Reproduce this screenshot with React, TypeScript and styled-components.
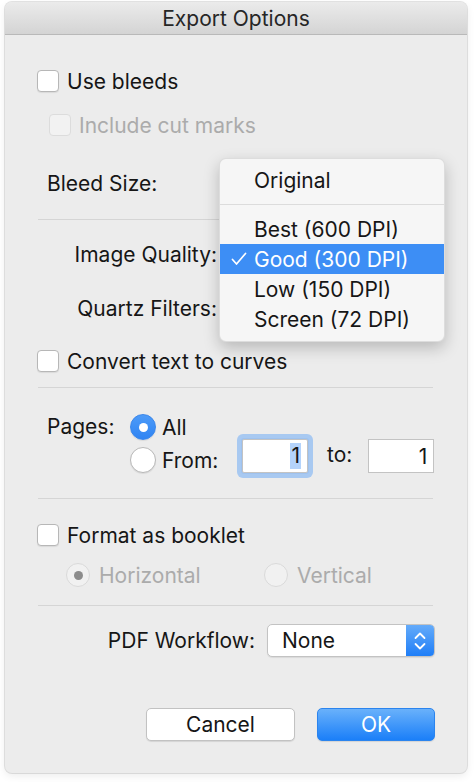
import React from 'react';
import styled, { createGlobalStyle } from 'styled-components';

const GlobalStyle = createGlobalStyle`
  html, body {
    margin: 0;
    padding: 0;
    background: #ffffff;
  }
  body {
    font-family: Inter, 'Liberation Sans', sans-serif;
    color: #161616;
    -webkit-font-smoothing: antialiased;
  }
`;

const Page = styled.div`
  width: 474px;
  height: 782px;
  padding: 2px 7px 0 5px;
  box-sizing: border-box;
`;

const Window = styled.div`
  position: relative;
  width: 462px;
  height: 771px;
  background: #ececec;
  border-radius: 7px;
  box-shadow: 0 0 0 1px rgba(0, 0, 0, 0.1), 0 3px 8px rgba(0, 0, 0, 0.08);
  display: flex;
  flex-direction: column;
`;

const TitleBar = styled.div`
  height: 33px;
  box-sizing: border-box;
  border-radius: 7px 7px 0 0;
  border-bottom: 1px solid #b9b9b9;
  background: linear-gradient(#ebebeb, #d4d4d4);
  display: flex;
  align-items: center;
  justify-content: center;
  font-size: 21px;
  color: #262626;
`;

const Body = styled.div`
  display: flex;
  flex-direction: column;
  padding: 0 32px;
  font-size: 21px;
`;

const Row = styled.div<{ $top: number; $indent?: number; $h: number }>`
  display: flex;
  align-items: center;
  height: ${(p) => p.$h}px;
  margin-top: ${(p) => p.$top}px;
  padding-left: ${(p) => p.$indent ?? 0}px;
  gap: 8px;
`;

const Separator = styled.div<{ $top: number }>`
  height: 1px;
  background: #d5d5d5;
  margin: ${(p) => p.$top}px 2px 0 1px;
`;

const Box = styled.span<{ $disabled?: boolean }>`
  width: 22px;
  height: 22px;
  box-sizing: border-box;
  border-radius: 4px;
  background: ${(p) => (p.$disabled ? '#f2f2f2' : '#ffffff')};
  border: 1px solid ${(p) => (p.$disabled ? '#dcdcdc' : '#b7b7b7')};
  box-shadow: ${(p) => (p.$disabled ? 'none' : '0 1px 1px rgba(0,0,0,0.08)')};
  flex: none;
`;

const Text = styled.span<{ $disabled?: boolean }>`
  color: ${(p) => (p.$disabled ? '#ababab' : '#161616')};
  white-space: nowrap;
  line-height: 1;
`;

const FieldLabel = styled.span<{ $width: number; $align?: string; $indent?: number }>`
  width: ${(p) => p.$width}px;
  text-align: ${(p) => p.$align ?? 'right'};
  padding-left: ${(p) => p.$indent ?? 0}px;
  box-sizing: border-box;
  white-space: nowrap;
  flex: none;
  line-height: 26px;
`;

const Radio = styled.span<{ $on?: boolean; $disabled?: boolean; $size: number }>`
  width: ${(p) => p.$size}px;
  height: ${(p) => p.$size}px;
  box-sizing: border-box;
  border-radius: 50%;
  flex: none;
  display: flex;
  align-items: center;
  justify-content: center;
  background: ${(p) =>
    p.$on && !p.$disabled ? 'linear-gradient(#4d9bf8, #2f84f3)' : p.$disabled ? '#f1f1f1' : '#ffffff'};
  border: 1px solid
    ${(p) => (p.$on && !p.$disabled ? '#3a86ea' : p.$disabled ? '#dadada' : '#b8b8b8')};
  box-shadow: ${(p) => (p.$disabled ? 'none' : '0 1px 1px rgba(0,0,0,0.08)')};

  &::after {
    content: '';
    display: ${(p) => (p.$on ? 'block' : 'none')};
    width: 9px;
    height: 9px;
    border-radius: 50%;
    background: ${(p) => (p.$disabled ? '#8c8c8c' : '#ffffff')};
  }
`;

const PagesBlock = styled.div`
  display: flex;
  margin-top: 26px;
`;

const PagesColumn = styled.div`
  display: flex;
  flex-direction: column;
`;

const RadioRow = styled.div<{ $h: number; $top?: number }>`
  display: flex;
  align-items: flex-end;
  height: ${(p) => p.$h}px;
  margin-top: ${(p) => p.$top ?? 0}px;
`;

const RadioItem = styled.span<{ $width?: number; $gap?: number }>`
  display: flex;
  align-items: center;
  gap: ${(p) => p.$gap ?? 6}px;
  height: 26px;
  width: ${(p) => (p.$width ? `${p.$width}px` : 'auto')};
  flex: none;
`;

const NumberField = styled.span<{ $focused?: boolean; $width: number; $left: number }>`
  width: ${(p) => p.$width}px;
  height: 34px;
  box-sizing: border-box;
  margin-left: ${(p) => p.$left}px;
  background: #ffffff;
  border: 1px solid #c3c3c3;
  display: flex;
  align-items: center;
  justify-content: flex-end;
  padding-right: 6px;
  box-shadow: ${(p) => (p.$focused ? '0 0 0 1px #9fc2ee, 0 0 0 5px #a8c9f1' : 'none')};
  border-radius: ${(p) => (p.$focused ? '2px' : '0')};
  flex: none;
`;

const Selected = styled.span`
  background: #b4d3fb;
  padding: 2px 1px 3px;
  line-height: 1;
`;

const ToLabel = styled.span`
  margin-left: 19px;
  margin-bottom: 5px;
  line-height: 26px;
`;

const PopupButton = styled.div`
  width: 168px;
  height: 33px;
  box-sizing: border-box;
  background: #ffffff;
  border: 1px solid #c3c3c3;
  border-radius: 5px;
  box-shadow: 0 1px 1px rgba(0, 0, 0, 0.08);
  display: flex;
  align-items: center;
  overflow: hidden;
  margin-left: 12px;
`;

const PopupValue = styled.span`
  flex: 1;
  padding-left: 14px;
`;

const Stepper = styled.span`
  width: 28px;
  height: 100%;
  background: linear-gradient(#64abfa, #1f7ef7);
  display: flex;
  align-items: center;
  justify-content: center;
`;

const ButtonRow = styled.div`
  display: flex;
  justify-content: flex-end;
  gap: 22px;
  margin-top: 51px;
`;

const Button = styled.button<{ $primary?: boolean; $width: number }>`
  width: ${(p) => p.$width}px;
  height: 33px;
  border-radius: 5px;
  font: inherit;
  font-size: 21px;
  cursor: pointer;
  color: ${(p) => (p.$primary ? '#ffffff' : '#161616')};
  background: ${(p) => (p.$primary ? 'linear-gradient(#69b1fb, #1b7ff8)' : '#ffffff')};
  border: 1px solid ${(p) => (p.$primary ? '#2b84ee' : '#c2c2c2')};
  box-shadow: 0 1px 1px rgba(0, 0, 0, 0.1);
`;

const Menu = styled.div`
  position: absolute;
  left: 214px;
  top: 156px;
  width: 226px;
  height: 184px;
  box-sizing: border-box;
  padding: 6px 0;
  background: #f6f6f6;
  border-radius: 7px;
  border: 1px solid rgba(0, 0, 0, 0.1);
  box-shadow: 0 6px 16px rgba(0, 0, 0, 0.22);
  font-size: 21px;
`;

const MenuItem = styled.div<{ $active?: boolean }>`
  position: relative;
  height: 30px;
  display: flex;
  align-items: center;
  padding-left: 34px;
  background: ${(p) => (p.$active ? '#3d8ef5' : 'transparent')};
  color: ${(p) => (p.$active ? '#ffffff' : '#161616')};
`;

const MenuDivider = styled.div`
  height: 1px;
  background: #dcdcdc;
  margin: 9px 0 9px;
`;

const Check = styled.svg`
  position: absolute;
  left: 11px;
  top: 8px;
`;

const menuItems = ['Best (600 DPI)', 'Good (300 DPI)', 'Low (150 DPI)', 'Screen (72 DPI)'];

export default function App() {
  return (
    <>
      <GlobalStyle />
      <Page>
        <Window>
          <TitleBar>Export Options</TitleBar>
          <Body>
            <Row $top={35} $h={22}>
              <Box />
              <Text>Use bleeds</Text>
            </Row>
            <Row $top={22} $h={22} $indent={12}>
              <Box $disabled />
              <Text $disabled>Include cut marks</Text>
            </Row>
            <Row $top={31} $h={34}>
              <FieldLabel $width={140} $align="left" $indent={10}>
                Bleed Size:
              </FieldLabel>
            </Row>
            <Separator $top={18} />
            <Row $top={18} $h={34}>
              <FieldLabel $width={180}>Image Quality:</FieldLabel>
            </Row>
            <Row $top={20} $h={34}>
              <FieldLabel $width={180}>Quartz Filters:</FieldLabel>
            </Row>
            <Row $top={24} $h={22}>
              <Box />
              <Text>Convert text to curves</Text>
            </Row>
            <Separator $top={15} />
            <PagesBlock>
              <FieldLabel $width={93} $align="left" $indent={10}>
                Pages:
              </FieldLabel>
              <PagesColumn>
                <RadioRow $h={26}>
                  <RadioItem>
                    <Radio $on $size={26} />
                    <Text>All</Text>
                  </RadioItem>
                </RadioRow>
                <RadioRow $h={34} $top={-1}>
                  <RadioItem $width={106}>
                    <Radio $size={26} />
                    <Text>From:</Text>
                  </RadioItem>
                  <NumberField $focused $width={66} $left={6}>
                    <Selected>1</Selected>
                  </NumberField>
                  <ToLabel>to:</ToLabel>
                  <NumberField $width={66} $left={16}>
                    1
                  </NumberField>
                </RadioRow>
              </PagesColumn>
            </PagesBlock>
            <Separator $top={25} />
            <Row $top={25} $h={22}>
              <Box />
              <Text>Format as booklet</Text>
            </Row>
            <Row $top={17} $h={24} $indent={29} style={{ gap: 0 }}>
              <RadioItem $width={198} $gap={9}>
                <Radio $on $disabled $size={24} />
                <Text $disabled>Horizontal</Text>
              </RadioItem>
              <RadioItem $gap={9}>
                <Radio $disabled $size={24} />
                <Text $disabled>Vertical</Text>
              </RadioItem>
            </Row>
            <Separator $top={18} />
            <Row $top={18} $h={33} style={{ gap: 0 }}>
              <FieldLabel $width={218}>PDF Workflow:</FieldLabel>
              <PopupButton>
                <PopupValue>None</PopupValue>
                <Stepper>
                  <svg width="14" height="22" viewBox="0 0 14 22" fill="none">
                    <path d="M2.5 8 L7 3.5 L11.5 8" stroke="#fff" strokeWidth="1.8" strokeLinecap="round" strokeLinejoin="round" />
                    <path d="M2.5 14 L7 18.5 L11.5 14" stroke="#fff" strokeWidth="1.8" strokeLinecap="round" strokeLinejoin="round" />
                  </svg>
                </Stepper>
              </PopupButton>
            </Row>
            <ButtonRow>
              <Button $width={149}>Cancel</Button>
              <Button $primary $width={118}>
                OK
              </Button>
            </ButtonRow>
          </Body>
          <Menu>
            <MenuItem>Original</MenuItem>
            <MenuDivider />
            {menuItems.map((label, i) => (
              <MenuItem key={label} $active={i === 1}>
                {i === 1 && (
                  <Check width="16" height="14" viewBox="0 0 16 14" fill="none">
                    <path d="M1.5 7.5 L5.5 12 L14.5 1.5" stroke="#fff" strokeWidth="1.7" strokeLinecap="round" strokeLinejoin="round" />
                  </Check>
                )}
                {label}
              </MenuItem>
            ))}
          </Menu>
        </Window>
      </Page>
    </>
  );
}
